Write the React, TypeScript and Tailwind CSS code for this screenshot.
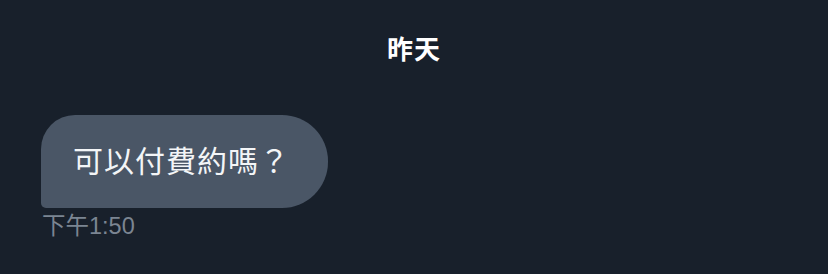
export default function App() {
  return (
    <div
      className="w-[828px] h-[274px] bg-[#18202b] flex flex-col overflow-hidden"
      style={{ fontFamily: '"Liberation Sans", "Noto Sans CJK TC", sans-serif' }}
    >
      <div className="pt-[34px] flex justify-center">
        <span className="text-[26px] leading-[32px] font-bold text-white tracking-[1px]">昨天</span>
      </div>
      <div className="mt-[49px] pl-[41px] flex flex-col items-start">
        <div className="h-[93px] flex items-center pl-[32px] pr-[38px] bg-[#4a5666] rounded-tl-[34px] rounded-tr-[46px] rounded-br-[46px] rounded-bl-[5px]">
          <span className="text-[30px] leading-[36px] text-[#f3f5f7] tracking-[1px]">可以付費約嗎？</span>
        </div>
        <div className="mt-[5px] pl-[1px] text-[23.5px] leading-[26px] text-[#7b8592]">下午1:50</div>
      </div>
    </div>
  );
}
